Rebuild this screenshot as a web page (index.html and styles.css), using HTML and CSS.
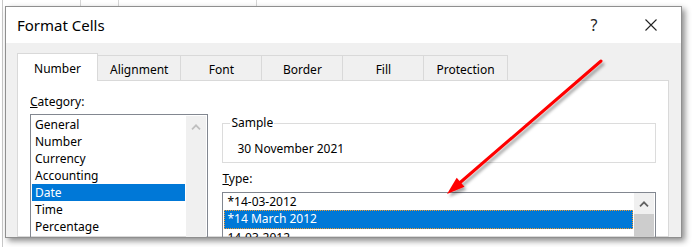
FILE: index.html
```html
<!DOCTYPE html>
<html lang="en">
<head>
    <meta charset="UTF-8">
    <title>Format Cells</title>
    <link rel="stylesheet" href="styles.css">
</head>
<body>
    <div class="page">
        <div class="dialog">
            <div class="titlebar">
                <span class="title">Format Cells</span>
                <span class="help">?</span>
                <span class="close">
                    <svg width="12" height="12" viewBox="0 0 12 12">
                        <path d="M0.5 0.5 L11.5 11.5 M11.5 0.5 L0.5 11.5" stroke="#222" stroke-width="1.1" fill="none"/>
                    </svg>
                </span>
            </div>

            <div class="dialog-body">
                <div class="tabs">
                    <div class="tab active">Number</div>
                    <div class="tab">Alignment</div>
                    <div class="tab">Font</div>
                    <div class="tab">Border</div>
                    <div class="tab">Fill</div>
                    <div class="tab">Protection</div>
                </div>

                <div class="panel">
                    <div class="col-category">
                        <div class="label"><u>C</u>ategory:</div>
                        <div class="listbox category-list">
                            <div class="list-items">
                                <div class="list-item">General</div>
                                <div class="list-item">Number</div>
                                <div class="list-item">Currency</div>
                                <div class="list-item">Accounting</div>
                                <div class="list-item selected">Date</div>
                                <div class="list-item">Time</div>
                                <div class="list-item">Percentage</div>
                            </div>
                            <div class="scrollbar">
                                <div class="scroll-btn disabled">
                                    <svg width="10" height="6" viewBox="0 0 10 6"><polyline points="1,5.3 5,1.3 9,5.3" fill="none" stroke="currentColor" stroke-width="1.7"/></svg>
                                </div>
                            </div>
                        </div>
                    </div>

                    <div class="col-type">
                        <fieldset class="sample">
                            <legend>Sample</legend>
                            <div class="sample-value">30 November 2021</div>
                        </fieldset>
                        <div class="label type-label"><u>T</u>ype:</div>
                        <div class="listbox type-list">
                            <div class="list-items">
                                <div class="list-item">*14-03-2012</div>
                                <div class="list-item selected focused">*14 March 2012</div>
                                <div class="list-item">14-03-2012</div>
                            </div>
                            <div class="scrollbar">
                                <div class="scroll-btn">
                                    <svg width="10" height="6" viewBox="0 0 10 6"><polyline points="1,5.3 5,1.3 9,5.3" fill="none" stroke="currentColor" stroke-width="1.7"/></svg>
                                </div>
                                <div class="scroll-thumb"></div>
                            </div>
                        </div>
                    </div>
                </div>
            </div>
        </div>

        <!-- callout arrow drawn over the dialog -->
        <svg class="arrow" width="693" height="247" viewBox="0 0 693 247">
            <defs>
                <filter id="arrow-shadow" x="-20%" y="-20%" width="140%" height="140%">
                    <feDropShadow dx="2" dy="3" stdDeviation="1.4" flood-color="#000" flood-opacity="0.35"/>
                </filter>
            </defs>
            <g filter="url(#arrow-shadow)">
                <line x1="601" y1="61" x2="459" y2="183.5" stroke="#ff0000" stroke-width="3" stroke-linecap="round"/>
                <polygon points="447,194 464.5,186.7 456.7,177.7" fill="#ff0000"/>
            </g>
        </svg>
    </div>
</body>
</html>
```

FILE: styles.css
```css
:root {
    --cinza-fundo: #f0f0f0;
    --borda-clara: #d9d9d9;
    --borda-lista: #828790;
    --azul-selecao: #0078d7;
    --vermelho: #ff0000;
}

body {
    margin: 0;
    font-family: 'Segoe UI', 'Noto Sans', sans-serif;
    font-size: 12px;
    color: #000;
    background: #fff;
}

.page {
    position: relative;
    width: 693px;
    height: 247px;
    overflow: hidden;
    padding-top: 6px;
    box-sizing: border-box;
    background:
        linear-gradient(#d6d6d6, #d6d6d6) 80px 0 / 1px 6px no-repeat,
        linear-gradient(#d6d6d6, #d6d6d6) 118px 0 / 1px 6px no-repeat,
        linear-gradient(#d6d6d6, #d6d6d6) 256px 0 / 1px 6px no-repeat,
        linear-gradient(#c8c8c8, #c8c8c8) 2px 0 / 1px 247px no-repeat,
        #fff;
}

.dialog {
    margin-left: 5px;
    width: 677px;
    height: 232px;
    box-sizing: border-box;
    border: 1px solid #8f8f8f;
    background: var(--cinza-fundo);
    box-shadow: 3px 3px 6px rgba(0, 0, 0, 0.45);
    display: flex;
    flex-direction: column;
    overflow: hidden;
}

.titlebar {
    height: 36px;
    flex-shrink: 0;
    background: #fff;
    display: flex;
    align-items: center;
    padding-left: 11px;
}

.title {
    font-size: 15px;
    flex: 1;
}

.help {
    width: 24px;
    text-align: center;
    font-size: 16px;
    color: #222;
    margin-right: 33px;
}

.close {
    width: 24px;
    display: flex;
    justify-content: center;
    margin-right: 18px;
}

.dialog-body {
    flex: 1;
    display: flex;
    flex-direction: column;
    padding: 10px 12px 0 11px;
    min-height: 0;
}

.tabs {
    display: flex;
    align-items: flex-end;
    height: 27px;
    flex-shrink: 0;
}

.tab {
    height: 25px;
    min-width: 82px;
    padding: 2px 12px 0;
    box-sizing: border-box;
    border: 1px solid var(--borda-clara);
    border-bottom: none;
    margin-left: -1px;
    display: flex;
    align-items: center;
    justify-content: center;
}

.tab.active {
    width: 81px;
    min-width: 81px;
    height: 28px;
    margin-left: 0;
    margin-bottom: -1px;
    background: #fff;
    position: relative;
    z-index: 1;
}

.panel {
    flex: 1;
    background: #fff;
    border: 1px solid var(--borda-clara);
    padding: 13px 12px 0;
    display: flex;
    gap: 14px;
    min-height: 0;
}

.label {
    line-height: 16px;
}

.col-category {
    width: 179px;
}

.col-type {
    width: 435px;
}

.listbox {
    display: flex;
    border: 1px solid var(--borda-lista);
    box-sizing: border-box;
    overflow: hidden;
}

.category-list {
    margin-top: 4px;
    height: 140px;
    padding: 1px;
}

.type-list {
    margin-top: 5px;
    height: 80px;
    padding: 0 1px;
}

.list-items {
    flex: 1;
}

.list-item {
    height: 17px;
    line-height: 18px;
    padding-left: 3px;
    white-space: nowrap;
}

.list-item.selected {
    background: var(--azul-selecao);
    color: #fff;
}

.list-item.focused {
    border: 1px dotted #f39a2e;
    line-height: 16px;
    padding-left: 2px;
}

.scrollbar {
    width: 20px;
    margin-left: 1px;
    background: var(--cinza-fundo);
    display: flex;
    flex-direction: column;
}

.scroll-btn {
    height: 21px;
    display: flex;
    align-items: center;
    justify-content: center;
    color: #606060;
}

.scroll-btn.disabled {
    color: #bfbfbf;
}

.scroll-thumb {
    flex: 1;
    background: #cdcdcd;
}

.sample {
    margin: 21px 0 0;
    padding: 0 7px 5px;
    border: 1px solid #dcdcdc;
}

.sample legend {
    padding: 0 1px;
    line-height: 16px;
}

.sample-value {
    margin-top: 10px;
    padding-left: 7px;
    line-height: 16px;
}

.type-label {
    margin-top: 8px;
}

.arrow {
    position: absolute;
    left: 0;
    top: 0;
    pointer-events: none;
}
```
